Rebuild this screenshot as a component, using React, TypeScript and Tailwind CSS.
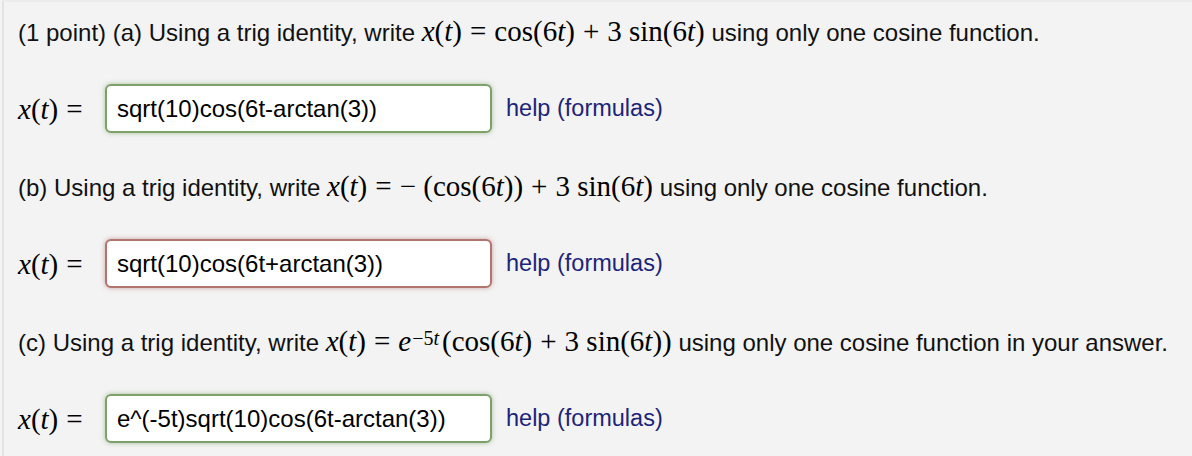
import React from "react";

const I = ({ children }: { children: React.ReactNode }) => <i className="italic">{children}</i>;
const Op = ({ children }: { children: React.ReactNode }) => <span className="mx-[8px]">{children}</span>;

function M({ children }: { children: React.ReactNode }) {
  return (
    <span className="text-[29px] text-black leading-[28px]" style={{ fontFamily: '"Liberation Serif", "DejaVu Serif", serif' }}>
      {children}
    </span>
  );
}

const X = () => (
  <>
    <I>x</I>(<I>t</I>)
  </>
);

function Answer({ value, tone }: { value: string; tone: "ok" | "bad" }) {
  const cls =
    tone === "ok"
      ? "border-[#7ea06a] shadow-[0_0_5px_rgba(110,150,90,0.55)]"
      : "border-[#b2756d] shadow-[0_0_5px_rgba(170,100,95,0.55)]";
  return (
    <div className="flex items-center h-[49px] shrink-0">
      <M>
        <span className="inline-block w-[87px]">
          <X />
          <Op>=</Op>
        </span>
      </M>
      <div
        className={`w-[387px] h-[49px] bg-white border-2 rounded-[6px] flex items-center pl-[10px] text-[24px] text-black ${cls}`}
      >
        {value}
      </div>
      <a className="ml-[14px] text-[23.5px] text-[#1c2479]">help (formulas)</a>
    </div>
  );
}

const P = ({ children }: { children: React.ReactNode }) => (
  <p className="h-[28px] shrink-0 text-[24px] leading-[28px] text-[#111] whitespace-nowrap">{children}</p>
);

export default function App() {
  return (
    <div
      className="w-[1192px] h-[456px] bg-[#f3f3f3] overflow-hidden"
      style={{ fontFamily: '"Liberation Sans", Arial, sans-serif' }}
    >
      <div className="h-full ml-[2px] border-l-2 border-[#e3e3e3] border-t-2 border-t-[#ececec] pl-[14px] pt-[15px] flex flex-col gap-[39px]">
        <P>
          (1 point) (a) Using a trig identity, write{" "}
          <M>
            <X />
            <Op>=</Op>cos(6<I>t</I>)<Op>+</Op>3 sin(6<I>t</I>)
          </M>{" "}
          using only one cosine function.
        </P>
        <Answer value="sqrt(10)cos(6t-arctan(3))" tone="ok" />
        <P>
          (b) Using a trig identity, write{" "}
          <M>
            <X />
            <Op>=</Op>− (cos(6<I>t</I>))<Op>+</Op>3 sin(6<I>t</I>)
          </M>{" "}
          using only one cosine function.
        </P>
        <Answer value="sqrt(10)cos(6t+arctan(3))" tone="bad" />
        <P>
          (c) Using a trig identity, write{" "}
          <M>
            <X />
            <Op>=</Op>
            <I>e</I>
            <sup className="text-[20px] leading-[0] relative -top-[6px] ml-[1px] mr-[3px]">
              −5<I>t</I>
            </sup>
            (cos(6<I>t</I>)<Op>+</Op>3 sin(6<I>t</I>))
          </M>{" "}
          using only one cosine function in your answer.
        </P>
        <Answer value="e^(-5t)sqrt(10)cos(6t-arctan(3))" tone="ok" />
      </div>
    </div>
  );
}
